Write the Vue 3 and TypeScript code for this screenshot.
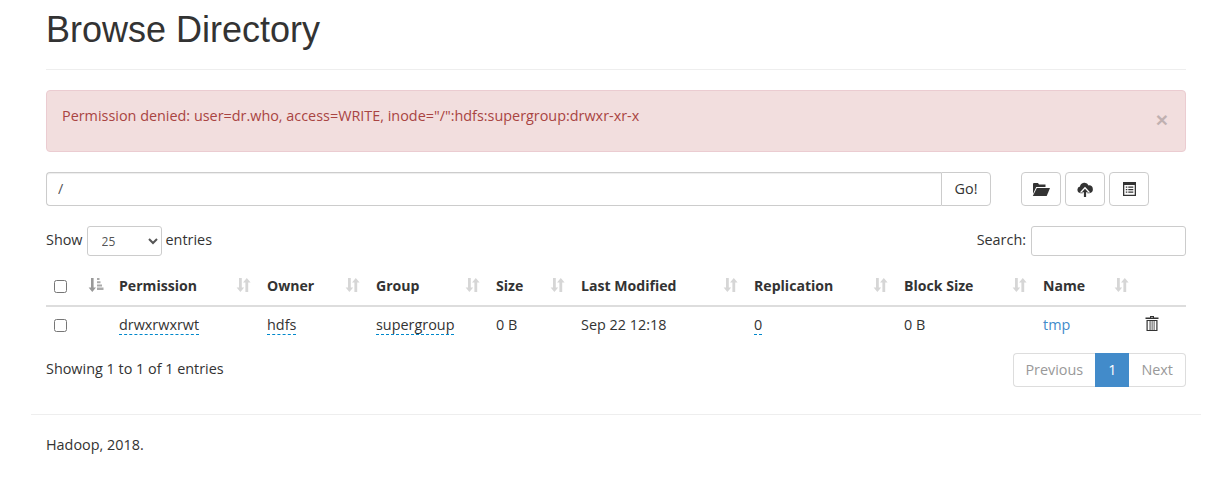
<script setup lang="ts">
interface Col { label: string; width: number }
const cols: Col[] = [
  { label: 'Permission', width: 148 },
  { label: 'Owner', width: 109 },
  { label: 'Group', width: 120 },
  { label: 'Size', width: 85 },
  { label: 'Last Modified', width: 173 },
  { label: 'Replication', width: 150 },
  { label: 'Block Size', width: 139 },
  { label: 'Name', width: 102 },
]
</script>

<template>
  <div class="container">
    <div class="page-header"><h1>Browse Directory</h1></div>

    <div class="alert">
      <span>Permission denied: user=dr.who, access=WRITE, inode="/":hdfs:supergroup:drwxr-xr-x</span>
      <span class="close">×</span>
    </div>

    <div class="toolbar">
      <div class="path-group">
        <input class="path" value="/" />
        <button class="go">Go!</button>
      </div>
      <div class="actions">
        <button class="icon-btn" aria-label="Create directory">
          <svg width="18" height="13" viewBox="0 0 18 13"><path d="M2 0h4l1 1.500h6.500V4H4.200L1 11V1a1 1 0 0 1 1-1z" fill="#333"/><path d="M4.800 5H18l-3.300 8H.8z" fill="#333"/></svg>
        </button>
        <button class="icon-btn" aria-label="Upload">
          <svg width="16" height="15" viewBox="0 0 16 15"><path d="M3.600 11.200A3.400 3.400 0 0 1 3 4.500 4.500 4.500 0 0 1 11.600 3.400a3.900 3.900 0 0 1 .7 7.800H3.600z" fill="#333"/><path d="M8 4.800l5.300 5.700h-3V15H5.700v-4.500h-3z" fill="#fff"/><path d="M8 6.800l3.200 3.500H9.100V15H6.900v-4.700H4.800z" fill="#333"/></svg>
        </button>
        <button class="icon-btn" aria-label="Cut and paste">
          <svg width="13" height="14" viewBox="0 0 13 14"><path fill-rule="evenodd" d="M0 0h13v14H0zM1.300 3v9.700h10.400V3z" fill="#333"/><path d="M2.800 4.500h1.500v1.200H2.800zM5.300 4.500h5v1.200h-5zM2.800 7h1.500v1.200H2.800zM5.300 7h5v1.200h-5zM2.800 9.500h1.500v1.200H2.800zM5.300 9.500h5v1.200h-5z" fill="#333"/></svg>
        </button>
      </div>
    </div>

    <div class="controls">
      <label class="length">
        Show
        <select class="page-size"><option>25</option></select>
        entries
      </label>
      <label class="search">Search: <input class="search-input" /></label>
    </div>

    <table class="listing">
      <colgroup>
        <col style="width: 65px" />
        <col v-for="c in cols" :key="c.label" :style="{ width: c.width + 'px' }" />
        <col style="width: 49px" />
      </colgroup>
      <thead>
        <tr>
          <th class="sort-cell">
            <input type="checkbox" class="check" />
            <svg class="sort active" width="16" height="14" viewBox="0 0 16 14"><path d="M3 0h2.600v9.500H8L4.300 14 .6 9.500H3z" fill="#999"/><path d="M9 0h2.500v2H9zM9 3.200h3.500v2H9zM9 6.400h5v2H9zM9 9.600h6.500v2.400H9z" fill="#aaa"/></svg>
          </th>
          <th v-for="c in cols" :key="c.label" class="sort-cell">
            {{ c.label }}
            <svg class="sort" width="15" height="14" viewBox="0 0 15 14"><path d="M3 0h2.800v9.500H8.200L4.400 14 .6 9.500H3zM9.400 14h2.800V4.500h2.400L10.800 0 7 4.500h2.400z" fill="#d6d6d6"/></svg>
          </th>
          <th></th>
        </tr>
      </thead>
      <tbody>
        <tr>
          <td><input type="checkbox" class="check" /></td>
          <td><span class="editable">drwxrwxrwt</span></td>
          <td><span class="editable">hdfs</span></td>
          <td><span class="editable">supergroup</span></td>
          <td>0 B</td>
          <td>Sep 22 12:18</td>
          <td><span class="editable">0</span></td>
          <td>0 B</td>
          <td><a class="link">tmp</a></td>
          <td>
            <svg class="trash" width="14" height="15" viewBox="0 0 14 15" aria-label="Delete">
              <path d="M5 0h4v1.500h4.500V3H.5V1.500H5zM6 .9v.6h2V.9z" fill="#333" fill-rule="evenodd"/>
              <path fill-rule="evenodd" d="M1.500 4h11v11h-11zM2.700 5v8.900h1.900V5zM5.500 5v8.900h1.200V5zM7.500 5v8.900h1.200V5zM9.500 5v8.900h1.800V5z" fill="#333"/>
            </svg>
          </td>
        </tr>
      </tbody>
    </table>

    <div class="table-footer">
      <div>Showing 1 to 1 of 1 entries</div>
      <div class="pagination">
        <span class="page first">Previous</span>
        <span class="page current">1</span>
        <span class="page last">Next</span>
      </div>
    </div>

    <hr class="foot-rule" />
    <footer class="footer">Hadoop, 2018.</footer>
  </div>
</template>

<style>
body {
  background: #fff;
}
</style>

<style scoped>
.container {
  box-sizing: border-box;
  width: 1170px;
  margin-left: 31px;
  padding: 0 15px;
  font-family: "Open Sans", "Liberation Sans", sans-serif;
  font-size: 14.4px;
  line-height: 20px;
  color: #333;
}
.page-header {
  height: 69px;
  border-bottom: 1px solid #eee;
  box-sizing: content-box;
}
h1 {
  margin: 0;
  padding-top: 10px;
  font-family: "Liberation Sans", Arial, sans-serif;
  font-size: 36px;
  font-weight: 400;
  line-height: 40px;
}
.alert {
  display: flex;
  justify-content: space-between;
  box-sizing: border-box;
  height: 62px;
  margin-top: 20px;
  padding: 15px;
  background: #f2dede;
  border: 1px solid #ebccd1;
  border-radius: 4px;
  color: #a94442;
}
.close {
  font-family: "Liberation Sans", Arial, sans-serif;
  font-size: 21px;
  font-weight: 700;
  line-height: 24px;
  color: #000;
  opacity: 0.2;
  margin-right: 2px;
  padding-top: 2px;
}
.toolbar {
  display: flex;
  margin-top: 20px;
  height: 34px;
}
.path-group {
  display: flex;
  width: 945px;
}
.path {
  flex: 1;
  min-width: 0;
  box-sizing: border-box;
  height: 34px;
  padding: 5px 11px 7px;
  border: 1px solid #ccc;
  border-right: 0;
  border-radius: 4px 0 0 4px;
  font: inherit;
  color: #555;
  box-shadow: inset 0 1px 1px rgba(0, 0, 0, 0.075);
  outline: none;
}
.go {
  box-sizing: border-box;
  width: 50px;
  height: 34px;
  padding: 0;
  background: #fff;
  border: 1px solid #ccc;
  border-radius: 0 4px 4px 0;
  font: inherit;
  color: #333;
}
.actions {
  display: flex;
  gap: 4px;
  margin-left: 30px;
}
.icon-btn {
  display: flex;
  align-items: center;
  justify-content: center;
  box-sizing: border-box;
  width: 40px;
  height: 34px;
  padding: 0;
  background: #fff;
  border: 1px solid #ccc;
  border-radius: 4px;
}
.controls {
  display: flex;
  justify-content: space-between;
  align-items: flex-start;
  height: 30px;
  margin-top: 20px;
}
.length,
.search {
  display: flex;
  align-items: center;
  gap: 4px;
  height: 28px;
}
.search {
  gap: 5px;
}
.page-size {
  box-sizing: border-box;
  flex: none;
  width: 75px;
  height: 30px;
  margin-bottom: -2px;
  padding: 0 10px;
  background: #fff;
  border: 1px solid #ccc;
  border-radius: 3px;
  font-family: inherit;
  font-size: 12px;
  color: #555;
}
.search-input {
  box-sizing: border-box;
  flex: none;
  width: 155px;
  height: 30px;
  margin-bottom: -2px;
  padding: 5px 10px;
  border: 1px solid #ccc;
  border-radius: 3px;
  outline: none;
}
.listing {
  width: 1140px;
  margin-top: 10px;
  table-layout: fixed;
  border-collapse: collapse;
}
th {
  position: relative;
  box-sizing: border-box;
  height: 40px;
  padding: 8px;
  border-bottom: 2px solid #ddd;
  text-align: left;
  font-size: 14.1px;
  font-weight: 700;
}
td {
  box-sizing: border-box;
  height: 37px;
  padding: 8px;
  vertical-align: middle;
}
.check {
  display: block;
  width: 13px;
  height: 13px;
  margin: 0;
}
th .check {
  margin-top: 1px;
}
.sort {
  position: absolute;
  right: 8px;
  top: 12px;
}
.sort.active {
  right: 7px;
}
.editable {
  border-bottom: 1px dashed #0088cc;
}
.link {
  color: #428bca;
}
.trash {
  display: block;
  margin-top: -3px;
}
.table-footer {
  display: flex;
  justify-content: space-between;
  align-items: flex-start;
  margin-top: 10px;
}
.table-footer > div:first-child {
  padding-top: 6px;
}
.pagination {
  display: flex;
  height: 34px;
}
.page {
  box-sizing: border-box;
  height: 34px;
  padding: 6px 12px;
  border: 1px solid #ddd;
  color: #999;
}
.first {
  border-radius: 4px 0 0 4px;
  border-right: 0;
  padding-left: 11.5px;
}
.last {
  border-radius: 0 4px 4px 0;
  border-left: 0;
}
.current {
  background: #428bca;
  border-color: #428bca;
  color: #fff;
}
.foot-rule {
  margin: 27px -15px 0;
  border: 0;
  border-top: 1px solid #eee;
}
.footer {
  padding-top: 20px;
}
</style>
